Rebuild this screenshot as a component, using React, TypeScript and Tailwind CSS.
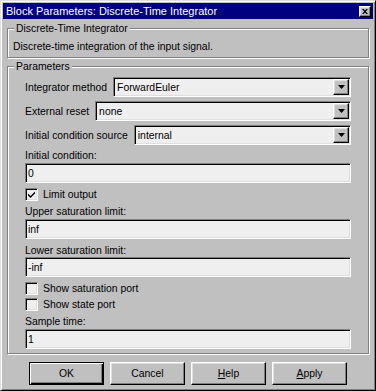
import type { ReactNode } from 'react';

const sunken =
  'border border-t-[#808080] border-l-[#808080] border-b-white border-r-white shadow-[inset_1px_1px_0_#000,inset_-1px_-1px_0_#dfdfdf]';
const raised =
  'border border-t-white border-l-white border-r-black border-b-black shadow-[inset_-1px_-1px_0_#808080,inset_1px_1px_0_#dfdfdf]';

function Combo({ value }: { value: string }) {
  return (
    <div className={`flex-1 h-[20px] flex items-center bg-[#efefef] ${sunken} p-[1px]`}>
      <span className="flex-1 pl-[2px] leading-[13px]">{value}</span>
      <div className={`w-[16px] h-full bg-[#c0c0c0] ${raised} flex items-center justify-center`}>
        <svg width="7" height="4" viewBox="0 0 7 4">
          <path d="M0 0h7L3.5 4z" fill="#000" />
        </svg>
      </div>
    </div>
  );
}

function ComboRow({ label, value, first }: { label: string; value: string; first?: boolean }) {
  return (
    <div className={`flex items-center gap-[6px] h-[20px] ${first ? '' : 'mt-[4px]'}`}>
      <span className="leading-[13px]">{label}</span>
      <Combo value={value} />
    </div>
  );
}

function TextField({ value, className = '' }: { value: string; className?: string }) {
  return (
    <div className={`h-[20px] flex items-center bg-[#efefef] ${sunken} pl-[2px] ${className}`}>
      <span className="leading-[13px]">{value}</span>
    </div>
  );
}

function Label({ text, className = '' }: { text: string; className?: string }) {
  return <div className={`h-[13px] leading-[13px] ${className}`}>{text}</div>;
}

function Check({ label, checked, className = '' }: { label: string; checked?: boolean; className?: string }) {
  return (
    <div className={`h-[15px] flex items-center gap-[5px] ${className}`}>
      <div className={`w-[13px] h-[13px] bg-[#efefef] ${sunken} flex items-center justify-center`}>
        {checked && (
          <svg width="7" height="7" viewBox="0 0 7 7">
            <path d="M0 2.5l2.5 2.5L7 0.5v2L2.5 7 0 4.5z" fill="#000" />
          </svg>
        )}
      </div>
      <span className="leading-[13px]">{label}</span>
    </div>
  );
}

function GroupBox({ title, className = '', children }: { title: string; className?: string; children: ReactNode }) {
  return (
    <div
      className={`relative mx-[4px] border border-[#808080] shadow-[inset_1px_1px_0_#fff,1px_1px_0_#fff] ${className}`}
    >
      <span className="absolute -top-[7px] left-[6px] px-[2px] bg-[#c0c0c0] leading-[13px]">{title}</span>
      {children}
    </div>
  );
}

function Btn({ children, isDefault }: { children: ReactNode; isDefault?: boolean }) {
  return (
    <button
      className={`w-[75px] h-[23px] bg-[#c0c0c0] flex items-center justify-center leading-[13px] ${
        isDefault
          ? 'border border-black shadow-[inset_1px_1px_0_#fff,inset_-1px_-1px_0_#000,inset_-2px_-2px_0_#808080]'
          : raised
      }`}
    >
      {children}
    </button>
  );
}

export default function App() {
  return (
    <div
      className="w-[376px] h-[391px] bg-[#c0c0c0] text-black text-[10.4px] border border-t-[#dfdfdf] border-l-[#dfdfdf] border-r-black border-b-black shadow-[inset_1px_1px_0_#fff,inset_-1px_-1px_0_#808080] p-[2px] flex flex-col"
      style={{ fontFamily: '"Liberation Sans", Arial, sans-serif' }}
    >
      {/* Title bar */}
      <div className="h-[16px] bg-[#000080] flex items-center pl-[3px] pr-[2px]">
        <span className="flex-1 text-white text-[11px] leading-[14px]">Block Parameters: Discrete-Time Integrator</span>
        <div className={`w-[12px] h-[11px] bg-[#c0c0c0] ${raised} flex items-center justify-center`}>
          <svg width="6" height="5" viewBox="0 0 6 5">
            <path d="M0 0h1.6L3 1.6 4.4 0H6L3.8 2.5 6 5H4.4L3 3.4 1.6 5H0l2.2-2.5z" fill="#000" />
          </svg>
        </div>
      </div>

      {/* Description */}
      <GroupBox title="Discrete-Time Integrator" className="mt-[9px] h-[30px] pl-[5px] pt-[11px]">
        <div className="leading-[13px]">Discrete-time integration of the input signal.</div>
      </GroupBox>

      {/* Parameters */}
      <GroupBox title="Parameters" className="mt-[8px] h-[288px] px-[17px] pt-[10px]">
        <div className="flex flex-col">
          <ComboRow label="Integrator method" value="ForwardEuler" first />
          <ComboRow label="External reset" value="none" />
          <ComboRow label="Initial condition source" value="internal" />
          <Label text="Initial condition:" className="mt-[4px]" />
          <TextField value="0" className="mt-[1px]" />
          <Check label="Limit output" checked className="mt-[4px]" />
          <Label text="Upper saturation limit:" className="mt-[3px]" />
          <TextField value="inf" className="mt-[1px]" />
          <Label text="Lower saturation limit:" className="mt-[5px]" />
          <TextField value="-inf" />
          <Check label="Show saturation port" className="mt-[4px]" />
          <Check label="Show state port" className="mt-[1px]" />
          <Label text="Sample time:" className="mt-[3px]" />
          <TextField value="1" className="mt-[1px]" />
        </div>
      </GroupBox>

      {/* Buttons */}
      <div className="mt-[8px] flex justify-center gap-[6px]">
        <Btn isDefault>OK</Btn>
        <Btn>Cancel</Btn>
        <Btn>
          <span>
            <span className="underline">H</span>elp
          </span>
        </Btn>
        <Btn>
          <span>
            <span className="underline">A</span>pply
          </span>
        </Btn>
      </div>
    </div>
  );
}
